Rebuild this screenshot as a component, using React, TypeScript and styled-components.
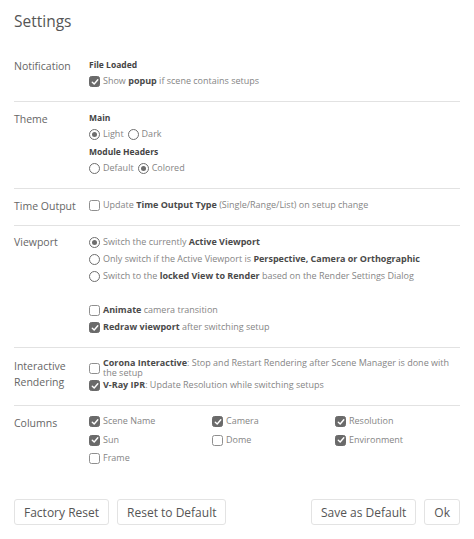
import React from "react";
import styled, { createGlobalStyle } from "styled-components";

const GlobalStyle = createGlobalStyle`
  html, body {
    margin: 0;
    padding: 0;
    background: #ffffff;
  }
  body {
    font-family: "Open Sans", "Liberation Sans", sans-serif;
    color: #666;
  }
`;

const Page = styled.div`
  width: 474px;
  height: 539px;
  box-sizing: border-box;
  padding: 11px 14px 0 14px;
  display: flex;
  flex-direction: column;
`;

const Title = styled.h1`
  margin: 0 0 26px 0;
  font-size: 15.5px;
  font-weight: 400;
  color: #555;
  line-height: 20px;
`;

const Section = styled.div<{ $last?: boolean }>`
  display: grid;
  grid-template-columns: 75px 1fr;
  padding: ${(p) => (p.$last ? "8px 0 0" : "8px 0 11px")};
  border-bottom: ${(p) => (p.$last ? "none" : "1px solid #e2e2e2")};
  &:first-of-type {
    padding-top: 0;
  }
`;

const Label = styled.div<{ $offset?: number }>`
  font-size: 10.5px;
  line-height: 16px;
  color: #666;
  padding-top: ${(p) => p.$offset ?? 1}px;
`;

const Body = styled.div`
  display: flex;
  flex-direction: column;
`;

const Heading = styled.div<{ $gap?: boolean }>`
  font-size: 8.5px;
  font-weight: 700;
  color: #444;
  line-height: 16px;
  margin-top: ${(p) => (p.$gap ? "1px" : "0")};
`;

const Row = styled.div`
  display: flex;
  align-items: center;
  gap: 4px;
  min-height: 17px;
`;

const Item = styled.label`
  display: flex;
  align-items: center;
  gap: 3px;
  font-size: 9px;
  line-height: 10.5px;
  color: #858585;
  b {
    font-weight: 700;
    color: #4a4a4a;
  }
`;

const WrapItem = styled(Item)`
  line-height: 10px;
  padding-top: 2px;
  margin-bottom: -1px;
`;

const Box = styled.span<{ $on?: boolean }>`
  flex: none;
  width: 11px;
  height: 11px;
  box-sizing: border-box;
  border-radius: 2.5px;
  border: 1px solid ${(p) => (p.$on ? "#6a6a6a" : "#8f8f8f")};
  background: ${(p) => (p.$on ? "#6a6a6a" : "#fff")};
  display: flex;
  align-items: center;
  justify-content: center;
`;

const Circle = styled.span<{ $on?: boolean }>`
  flex: none;
  width: 11px;
  height: 11px;
  box-sizing: border-box;
  border-radius: 50%;
  border: 1.3px solid #6e6e6e;
  display: flex;
  align-items: center;
  justify-content: center;
  &::after {
    content: "";
    display: ${(p) => (p.$on ? "block" : "none")};
    width: 5px;
    height: 5px;
    border-radius: 50%;
    background: #6e6e6e;
  }
`;

const Spacer = styled.div`
  height: 17px;
`;

const Columns = styled.div`
  display: grid;
  grid-template-columns: 123px 123px 1fr;
  row-gap: 1.5px;
  margin-top: -1px;
`;

const Footer = styled.div`
  display: flex;
  gap: 8px;
  margin-top: 32px;
`;

const Grow = styled.div`
  flex: 1;
`;

const Button = styled.button`
  height: 26px;
  padding: 0 9px;
  background: #fff;
  border: 1px solid #e3e3e3;
  border-radius: 3px;
  font-family: inherit;
  font-size: 12px;
  color: #555;
  cursor: pointer;
`;

function Check({ on }: { on?: boolean }) {
  return (
    <Box $on={on}>
      {on && (
        <svg width="8" height="8" viewBox="0 0 8 8">
          <path d="M1.3 4.2 L3.2 6 L6.8 1.8" fill="none" stroke="#fff" strokeWidth="1.4" strokeLinecap="round" strokeLinejoin="round" />
        </svg>
      )}
    </Box>
  );
}

function CheckItem({ on, children }: { on?: boolean; children: React.ReactNode }) {
  return (
    <Row>
      <Item>
        <Check on={on} />
        <span>{children}</span>
      </Item>
    </Row>
  );
}

function RadioItem({ on, children }: { on?: boolean; children: React.ReactNode }) {
  return (
    <Item>
      <Circle $on={on} />
      <span>{children}</span>
    </Item>
  );
}

const columns: [string, boolean][] = [
  ["Scene Name", true],
  ["Camera", true],
  ["Resolution", true],
  ["Sun", true],
  ["Dome", false],
  ["Environment", true],
  ["Frame", false],
];

export default function App() {
  return (
    <>
      <GlobalStyle />
      <Page>
        <Title>Settings</Title>

        <Section>
          <Label>Notification</Label>
          <Body>
            <Heading>File Loaded</Heading>
            <CheckItem on>
              Show <b>popup</b> if scene contains setups
            </CheckItem>
          </Body>
        </Section>

        <Section>
          <Label>Theme</Label>
          <Body>
            <Heading>Main</Heading>
            <Row>
              <RadioItem on>Light</RadioItem>
              <RadioItem>Dark</RadioItem>
            </Row>
            <Heading $gap>Module Headers</Heading>
            <Row>
              <RadioItem>Default</RadioItem>
              <RadioItem on>Colored</RadioItem>
            </Row>
          </Body>
        </Section>

        <Section>
          <Label>Time Output</Label>
          <Body>
            <CheckItem>
              Update <b>Time Output Type</b> (Single/Range/List) on setup change
            </CheckItem>
          </Body>
        </Section>

        <Section>
          <Label $offset={0}>Viewport</Label>
          <Body>
            <Row>
              <RadioItem on>
                Switch the currently <b>Active Viewport</b>
              </RadioItem>
            </Row>
            <Row>
              <RadioItem>
                Only switch if the Active Viewport is <b>Perspective, Camera or Orthographic</b>
              </RadioItem>
            </Row>
            <Row>
              <RadioItem>
                Switch to the <b>locked View to Render</b> based on the Render Settings Dialog
              </RadioItem>
            </Row>
            <Spacer />
            <CheckItem>
              <b>Animate</b> camera transition
            </CheckItem>
            <CheckItem on>
              <b>Redraw viewport</b> after switching setup
            </CheckItem>
          </Body>
        </Section>

        <Section>
          <Label $offset={2}>
            Interactive
            <br />
            Rendering
          </Label>
          <Body>
            <WrapItem>
              <Check />
              <span>
                <b>Corona Interactive</b>: Stop and Restart Rendering after Scene Manager is done with the setup
              </span>
            </WrapItem>
            <CheckItem on>
              <b>V-Ray IPR</b>: Update Resolution while switching setups
            </CheckItem>
          </Body>
        </Section>

        <Section $last>
          <Label>Columns</Label>
          <Columns>
            {columns.map(([name, on]) => (
              <CheckItem key={name} on={on}>
                {name}
              </CheckItem>
            ))}
          </Columns>
        </Section>

        <Footer>
          <Button>Factory Reset</Button>
          <Button>Reset to Default</Button>
          <Grow />
          <Button>Save as Default</Button>
          <Button>Ok</Button>
        </Footer>
      </Page>
    </>
  );
}
